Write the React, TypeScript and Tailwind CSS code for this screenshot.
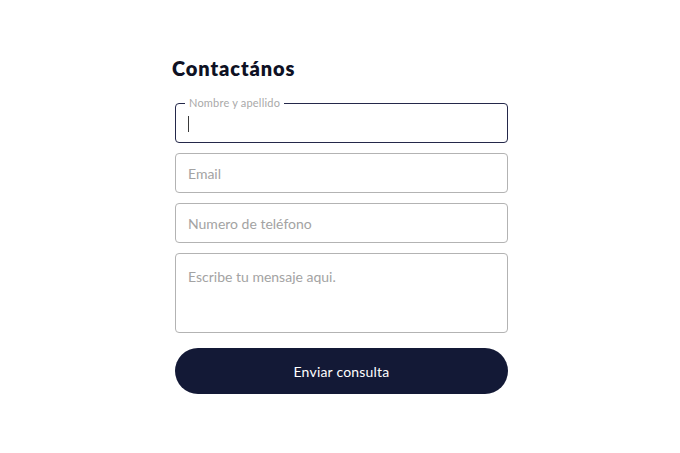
import { useState } from 'react';

const font = { fontFamily: '"Lato", "Open Sans", sans-serif' };

const ContactForm = () => {
  const [name, setName] = useState('');

  return (
    <div className="w-[333px] flex flex-col">
      <h2 className="text-[20px] font-extrabold text-[#0e1124] tracking-[0.9px] leading-none ml-[-3px] mb-[25px]">
        Contactános
      </h2>
      <div className="flex flex-col gap-[10px]">
        <div className="relative h-10 rounded-[4px] border border-[#24284a]">
          <span className="absolute -top-[8px] left-[9px] bg-white px-[4px] text-[11px] leading-[14px] tracking-[0.2px] text-[#a9a9a9]">
            Nombre y apellido
          </span>
          <input
            value={name}
            onChange={(e) => setName(e.target.value)}
            className="w-full h-full px-3 bg-transparent outline-none text-sm"
          />
          {name === '' && <span className="absolute left-[12px] top-[12px] w-px h-[16px] bg-[#3a3a3a]" />}
        </div>
        <input
          placeholder="Email"
          className="h-10 rounded-[4px] border border-[#b3b3b3] px-3 text-sm outline-none placeholder:text-[#a3a3a3]"
        />
        <input
          placeholder="Numero de teléfono"
          className="h-10 rounded-[4px] border border-[#b3b3b3] px-3 text-sm outline-none placeholder:text-[#a3a3a3]"
        />
        <textarea
          placeholder="Escribe tu mensaje aqui."
          className="h-20 resize-none rounded-[4px] border border-[#b3b3b3] px-3 pt-[13px] text-sm outline-none placeholder:text-[#a3a3a3]"
        />
      </div>
      <button className="mt-[15px] h-[46px] rounded-full bg-[#131936] text-white text-[14px] tracking-[0.2px]">
        Enviar consulta
      </button>
    </div>
  );
};

export default function App() {
  return (
    <div className="w-[680px] h-[453px] bg-white flex justify-start pl-[175px] pt-[58px]" style={font}>
      <ContactForm />
    </div>
  );
}
